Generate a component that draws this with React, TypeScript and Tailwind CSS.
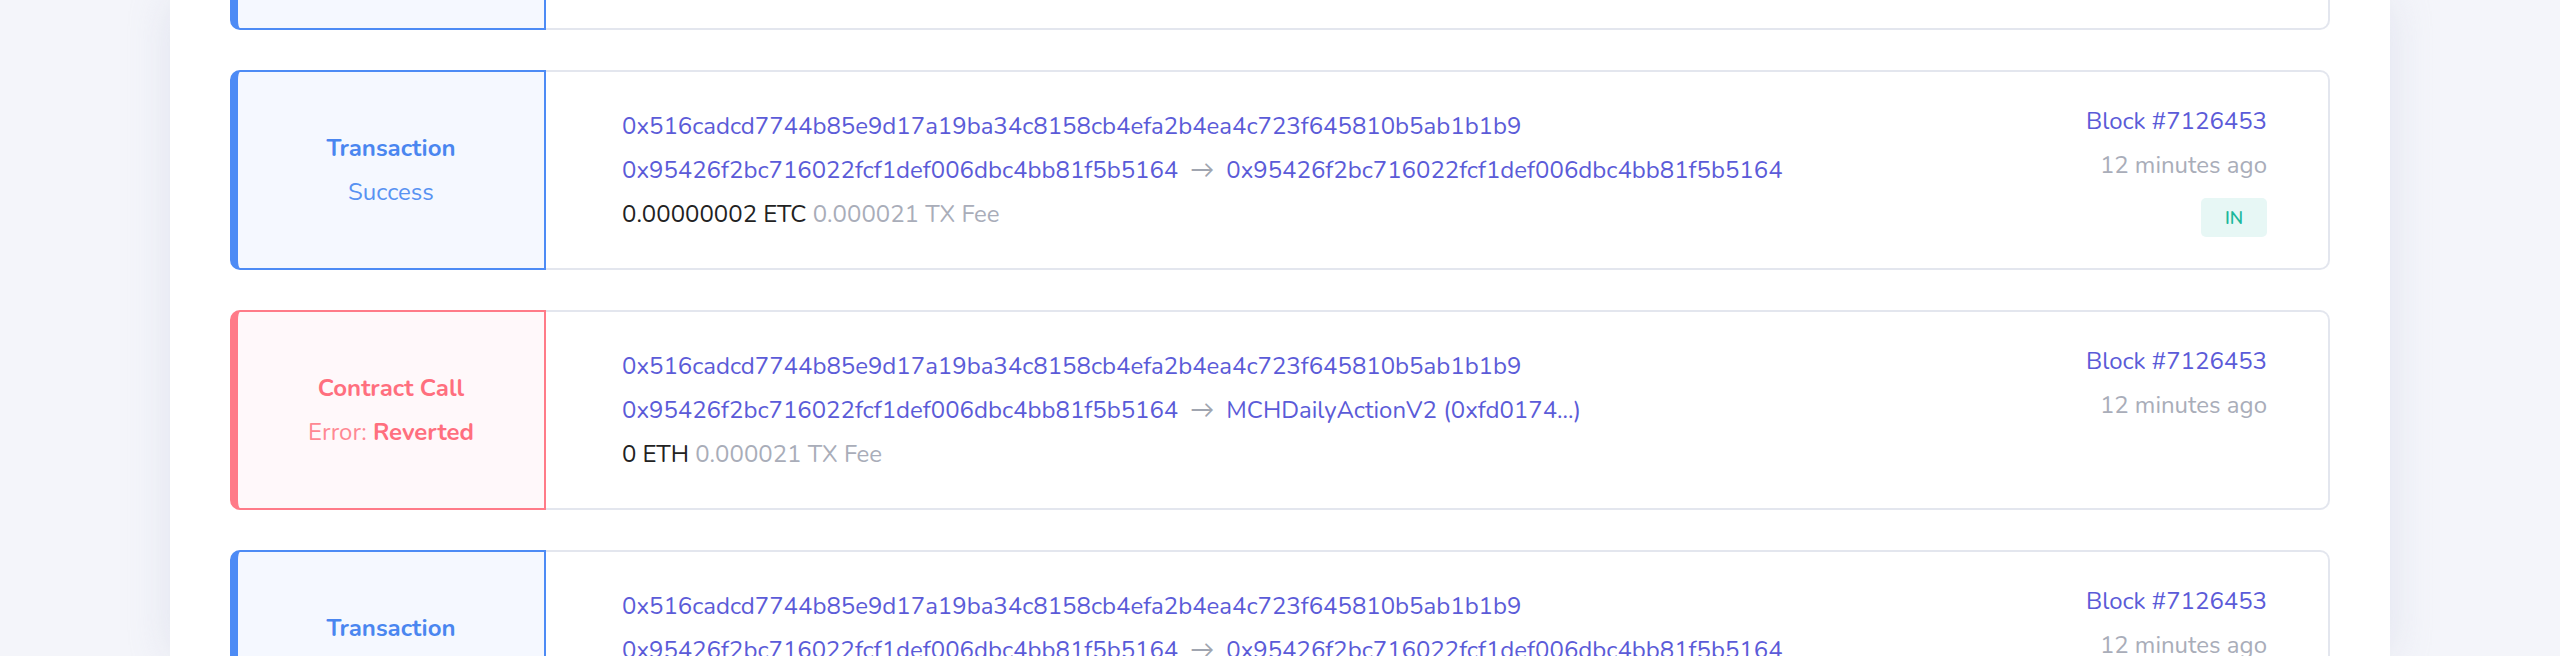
import React from 'react';

type Tx = {
  kind: 'tx' | 'call';
  hash: string;
  from: string;
  to: string;
  amount: string;
  fee: string;
  block: string;
  time: string;
  badge?: string;
};

const HASH = '0x516cadcd7744b85e9d17a19ba34c8158cb4efa2b4ea4c723f645810b5ab1b1b9';
const ADDR = '0x95426f2bc716022fcf1def006dbc4bb81f5b5164';

const txs: Tx[] = [
  { kind: 'tx', hash: HASH, from: ADDR, to: ADDR, amount: '0.00000002 ETC', fee: '0.000021 TX Fee', block: 'Block #7126453', time: '12 minutes ago', badge: 'IN' },
  { kind: 'tx', hash: HASH, from: ADDR, to: ADDR, amount: '0.00000002 ETC', fee: '0.000021 TX Fee', block: 'Block #7126453', time: '12 minutes ago', badge: 'IN' },
  { kind: 'call', hash: HASH, from: ADDR, to: 'MCHDailyActionV2 (0xfd0174...)', amount: '0 ETH', fee: '0.000021 TX Fee', block: 'Block #7126453', time: '12 minutes ago' },
  { kind: 'tx', hash: HASH, from: ADDR, to: ADDR, amount: '0.00000002 ETC', fee: '0.000021 TX Fee', block: 'Block #7126453', time: '12 minutes ago', badge: 'IN' },
];

function Status({ kind }: { kind: Tx['kind'] }) {
  if (kind === 'call') {
    return (
      <div className="w-[316px] shrink-0 flex flex-col items-center justify-center border-2 border-l-8 border-[#ff7b88] bg-[#fff8fa] rounded-l-[10px]">
        <div className="text-[24px] leading-[44px] font-bold text-[#ff6f7e]">Contract Call</div>
        <div className="text-[24px] leading-[44px] text-[#ff8893]">
          Error: <span className="font-bold text-[#ff6f7e]">Reverted</span>
        </div>
      </div>
    );
  }
  return (
    <div className="w-[316px] shrink-0 flex flex-col items-center justify-center border-2 border-l-8 border-[#4d8bf5] bg-[#f5f8ff] rounded-l-[10px]">
      <div className="text-[24px] leading-[44px] font-bold text-[#4a86f0]">Transaction</div>
      <div className="text-[24px] leading-[44px] text-[#5892f2]">Success</div>
    </div>
  );
}

function TxCard({ tx }: { tx: Tx }) {
  return (
    <div className="flex h-[200px] shrink-0">
      <Status kind={tx.kind} />
      <div className="flex-1 flex border-y-2 border-r-2 border-[#e3e6ee] rounded-r-[10px] bg-white">
        <div className="flex-1 flex flex-col justify-center pl-[76px] text-[24px] leading-[44px]">
          <div className="text-[#5b5bd8]">{tx.hash}</div>
          <div className="flex items-center">
            <span className="text-[#5b5bd8]">{tx.from}</span>
            <span className="mx-[12px] text-[#a0a5b0]">→</span>
            <span className="text-[#5b5bd8]">{tx.to}</span>
          </div>
          <div>
            <span className="text-[#222222]">{tx.amount}</span>{' '}
            <span className="text-[#a9adb9]">{tx.fee}</span>
          </div>
        </div>
        <div className="flex flex-col items-end pt-[27px] pr-[61px] text-[24px] leading-[44px]">
          <div className="text-[#5b5bd8]">{tx.block}</div>
          <div className="text-[#a9adb9]">{tx.time}</div>
          {tx.badge && (
            <div className="mt-[11px] w-[66px] h-[39px] flex items-center justify-center rounded-[5px] bg-[#e7f7f5] text-[18px] font-semibold text-[#1db89b]">
              {tx.badge}
            </div>
          )}
        </div>
      </div>
    </div>
  );
}

export default function App() {
  return (
    <div
      className="h-[656px] overflow-hidden bg-[#f4f5fa] px-[170px]"
      style={{ fontFamily: 'Nunito, Lato, "Noto Sans", sans-serif' }}
    >
      <div className="h-full flex flex-col bg-white px-[60px] shadow-[0_0_40px_rgba(200,203,225,0.45)]">
        <div className="-mt-[170px] flex flex-col gap-[40px]">
          {txs.map((tx, i) => (
            <TxCard key={i} tx={tx} />
          ))}
        </div>
      </div>
    </div>
  );
}
